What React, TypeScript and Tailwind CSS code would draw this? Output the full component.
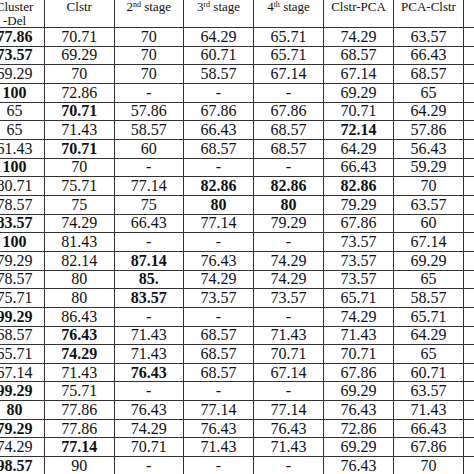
type Cell = string | [string];

// a cell given as [value] is printed in bold
const rows: Cell[][] = [
  [["77.86"], "70.71", "70", "64.29", "65.71", "74.29", "63.57"],
  [["73.57"], "69.29", "70", "60.71", "65.71", "68.57", "66.43"],
  ["69.29", "70", "70", "58.57", "67.14", "67.14", "68.57"],
  [["100"], "72.86", "-", "-", "-", "69.29", "65"],
  ["65", ["70.71"], "57.86", "67.86", "67.86", "70.71", "64.29"],
  ["65", "71.43", "58.57", "66.43", "68.57", ["72.14"], "57.86"],
  ["61.43", ["70.71"], "60", "68.57", "68.57", "64.29", "56.43"],
  [["100"], "70", "-", "-", "-", "66.43", "59.29"],
  ["80.71", "75.71", "77.14", ["82.86"], ["82.86"], ["82.86"], "70"],
  ["78.57", "75", "75", ["80"], ["80"], "79.29", "63.57"],
  [["83.57"], "74.29", "66.43", "77.14", "79.29", "67.86", "60"],
  [["100"], "81.43", "-", "-", "-", "73.57", "67.14"],
  ["79.29", "82.14", ["87.14"], "76.43", "74.29", "73.57", "69.29"],
  ["78.57", "80", ["85."], "74.29", "74.29", "73.57", "65"],
  ["75.71", "80", ["83.57"], "73.57", "73.57", "65.71", "58.57"],
  [["99.29"], "86.43", "-", "-", "-", "74.29", "65.71"],
  ["68.57", ["76.43"], "71.43", "68.57", "71.43", "71.43", "64.29"],
  ["65.71", ["74.29"], "71.43", "68.57", "70.71", "70.71", "65"],
  ["67.14", "71.43", ["76.43"], "68.57", "67.14", "67.86", "60.71"],
  [["99.29"], "75.71", "-", "-", "-", "69.29", "63.57"],
  [["80"], "77.86", "76.43", "77.14", "77.14", "76.43", "71.43"],
  [["79.29"], "77.86", "74.29", "76.43", "76.43", "72.86", "66.43"],
  ["74.29", ["77.14"], "70.71", "71.43", "71.43", "69.29", "67.86"],
  [["98.57"], "90", "-", "-", "-", "76.43", "70"],
];

const widths = ["w-[60px]", "w-[69.5px]", "w-[69.5px]", "w-[70px]", "w-[70px]", "w-[70px]", "w-[70px]", "w-[40px]"];

const App = () => {
  return (
    <div className="w-[474px] h-[474px] overflow-hidden bg-white text-[#111] font-['Liberation_Serif',serif]">
      <div className="ml-[-15px] w-[520px]">
        {/* header */}
        <div className="flex h-[28px] border-b border-[#333] text-[13px] leading-[13.5px]">
          <div className={`${widths[0]} shrink-0 border-r border-[#333] text-center`}>
            Cluster
            <br />
            -Del
          </div>
          <div className={`${widths[1]} shrink-0 border-r border-[#333] text-center`}>Clstr</div>
          <div className={`${widths[2]} shrink-0 border-r border-[#333] text-center`}>
            2<sup className="text-[8px]">nd</sup> stage
          </div>
          <div className={`${widths[3]} shrink-0 border-r border-[#333] text-center`}>
            3<sup className="text-[8px]">rd</sup> stage
          </div>
          <div className={`${widths[4]} shrink-0 border-r border-[#333] text-center`}>
            4<sup className="text-[8px]">th</sup> stage
          </div>
          <div className={`${widths[5]} shrink-0 border-r border-[#333] text-center`}>Clstr-PCA</div>
          <div className={`${widths[6]} shrink-0 border-r border-[#333] text-center`}>PCA-Clstr</div>
          <div className={`${widths[7]} shrink-0`}></div>
        </div>
        {/* body */}
        {rows.map((row, i) => (
          <div key={i} className="flex h-[18.67px] border-b border-[#333] text-[16px] leading-none">
            {row.map((cell, j) => {
              const bold = Array.isArray(cell);
              return (
                <div
                  key={j}
                  className={`${widths[j]} shrink-0 border-r border-[#333] flex items-center justify-center ${bold ? "font-bold" : ""}`}
                >
                  {bold ? cell[0] : cell}
                </div>
              );
            })}
            <div className={`${widths[7]} shrink-0`}></div>
          </div>
        ))}
      </div>
    </div>
  );
};

export default App;
